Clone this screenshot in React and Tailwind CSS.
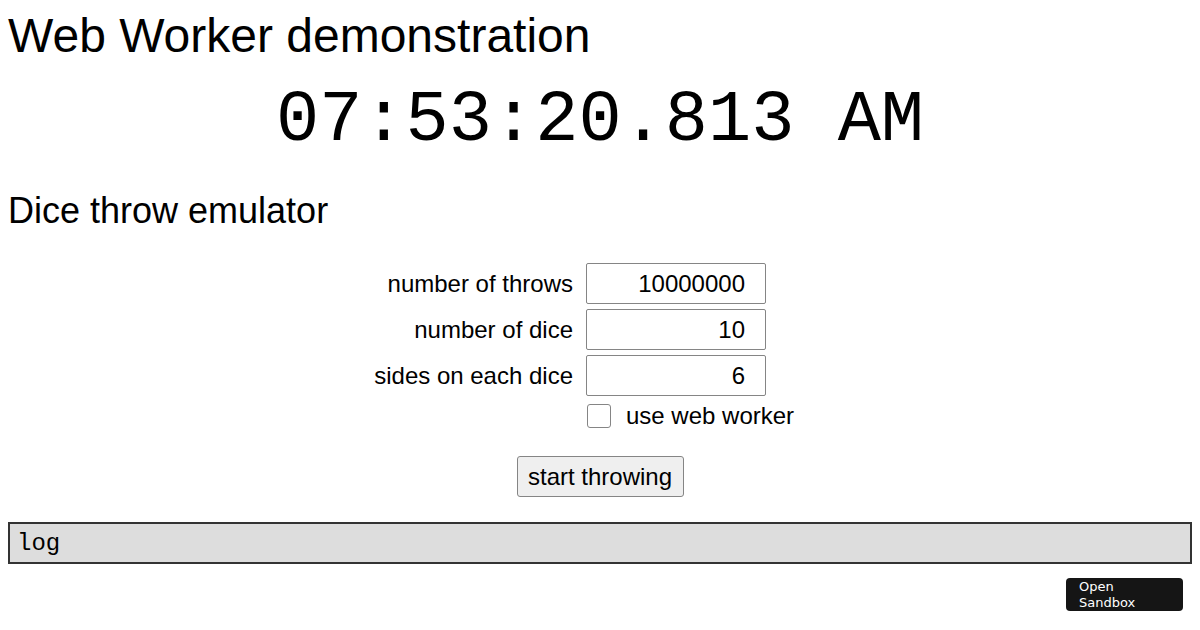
import React from 'react';

const App = () => {
  const fields = [
    { label: 'number of throws', value: '10000000' },
    { label: 'number of dice', value: '10' },
    { label: 'sides on each dice', value: '6' }
  ];

  return (
    <div className="relative min-h-[630px] bg-white px-2 pt-2 text-black text-[24px] font-['Liberation_Sans',Arial,sans-serif]">
      <h1 className="text-[48px] leading-[55px]">Web Worker demonstration</h1>

      {/* Clock */}
      <div className="mt-[17px] text-center text-[72px] leading-[82px] font-['Liberation_Mono','Courier_New',monospace]">
        07:53:20.813 AM
      </div>

      <h2 className="mt-[28px] text-[36px] leading-[41px]">Dice throw emulator</h2>

      {/* Form */}
      <div className="mt-[32px] grid grid-cols-[565px_auto] gap-x-[13px] gap-y-[5px] items-center">
        {fields.map((field, i) => (
          <React.Fragment key={i}>
            <label className="text-right leading-[28px]">{field.label}</label>
            <input
              type="text"
              readOnly
              value={field.value}
              className="w-[180px] h-[41px] border border-[#858585] rounded-[2px] pr-[20px] text-right text-[24px] outline-none"
            />
          </React.Fragment>
        ))}
        <div />
        <label className="mt-[3px] flex items-center gap-[15px] leading-[24px]">
          <span className="block w-[24px] h-[24px] border border-[#858585] rounded-[3px] bg-white ml-px" />
          use web worker
        </label>
      </div>

      <div className="mt-[28px] flex justify-center">
        <button className="w-[167px] h-[41px] bg-[#efefef] border border-[#858585] rounded-[3px] text-[24px] leading-[28px]">
          start throwing
        </button>
      </div>

      {/* Log */}
      <div className="mt-[25px] h-[42px] flex items-center bg-[#dddddd] border-2 border-[#333333] px-[7px] pt-[2px] font-['Liberation_Mono','Courier_New',monospace]">
        log
      </div>

      <button className="absolute right-[17px] bottom-[19px] w-[117px] h-[33px] rounded-[4px] bg-[#151515] pl-[13px] text-left text-[13px] leading-[16px] text-white font-['DejaVu_Sans',sans-serif]">
        Open
        <br />
        Sandbox
      </button>
    </div>
  );
};

export default App;
